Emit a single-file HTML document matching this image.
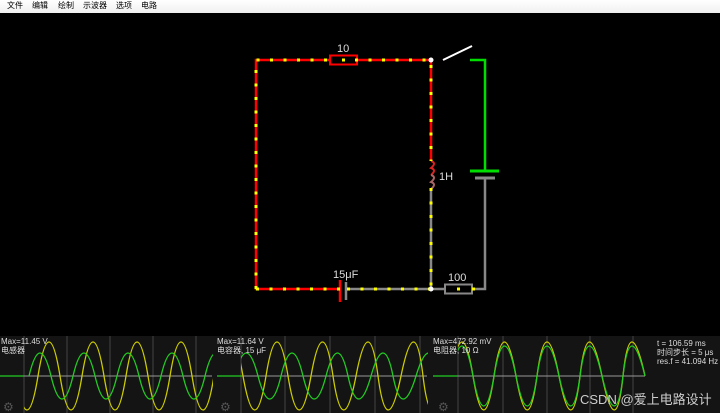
<!DOCTYPE html>
<html><head><meta charset="utf-8"><style>
body{margin:0;width:720px;height:413px;overflow:hidden;background:#000;font-family:"Liberation Sans","Noto Sans CJK SC",sans-serif}
.menu{position:absolute;left:0;top:0;width:720px;height:13px;background:linear-gradient(#fff,#f0f0f0);font-size:8px;line-height:12px;color:#000}
.menu span{position:absolute;top:0}
svg{position:absolute;left:0;top:0}
</style></head><body>
<div class="menu"><span style="left:7px">文件</span><span style="left:32px">编辑</span><span style="left:58px">绘制</span><span style="left:83px">示波器</span><span style="left:116px">选项</span><span style="left:141px">电路</span></div>
<svg width="720" height="413" viewBox="0 0 720 413">
<defs>
<clipPath id="c1"><rect x="24" y="336" width="189" height="77"/></clipPath>
<clipPath id="c2"><rect x="241" y="336" width="187" height="77"/></clipPath>
<clipPath id="c3"><rect x="458" y="336" width="188" height="77"/></clipPath>
</defs>
<!-- circuit wires -->
<g fill="none" stroke-width="2.5">
<path d="M329 60 H256 V289 H340" stroke="#f00"/>
<path d="M357 60 H431 V161" stroke="#f00"/>
<path d="M346 289 H444 M472 289 H485 V178 M431 188 V289" stroke="#888"/>
<path d="M470 60 H485 V171" stroke="#0d0"/>
<path d="M470 171 H499" stroke="#0d0" stroke-width="3"/>
<path d="M475 178 H495" stroke="#888" stroke-width="3"/>
<path d="M443 60 L472 46" stroke="#fff" stroke-width="2"/>
<rect x="330" y="55.5" width="27" height="9" stroke="#f00" stroke-width="2"/>
<rect x="445" y="284.5" width="27" height="9" stroke="#888" stroke-width="2"/>
<path d="M340 280 V302" stroke="#f00" stroke-width="2.5"/>
<path d="M346 282 V300" stroke="#888" stroke-width="2.5"/>
<path d="M431 161 q6 2 0 7 q6 2 0 7" stroke="#d22" stroke-width="2"/>
<path d="M431 175 q6 2 0 7 q6 2 0 7" stroke="#a66" stroke-width="2"/>
<!-- dots -->
<g stroke="#ff0" stroke-width="3" stroke-dasharray="3 10.5">
<path d="M256 289 V60 H329"/><path d="M355 60 H431 V161"/><path d="M256 289 H340"/>
<path d="M431 188 V289"/><path d="M347 289 H431"/><path d="M472 289 H485"/>
<path d="M342 60 H345"/><path d="M457 289 H460"/>
</g>
</g>
<circle cx="431" cy="60" r="2.5" fill="#fff"/><circle cx="431" cy="289" r="2.5" fill="#fff"/>
<g fill="#ddd" font-size="11"><text x="337" y="52">10</text><text x="439" y="180">1H</text><text x="333" y="278">15μF</text><text x="448" y="281">100</text></g>
<!-- scopes -->
<rect x="0" y="336" width="720" height="77" fill="#141414"/>
<g stroke="#444" stroke-width="1">
<path d="M24 336V413M67 336V413M110 336V413M153 336V413M196 336V413"/>
<path d="M241 336V413M285 336V413M330 336V413M375 336V413M420 336V413"/>
<path d="M458 336V413M503 336V413M547 336V413M590 336V413M633 336V413"/>
</g>
<g stroke="#999" stroke-width="1"><path d="M0 376H212M217 376H427M433 376H645"/></g>
<g fill="none" stroke-width="1.3">
<path d="M0 376H24M217 376H241M433 376H458" stroke="#2c2"/>
<g clip-path="url(#c1)">
<path d="M-6 376 Q5 308 16 376 T38 376 T60 376 T82 376 T104 376 T126 376 T148 376 T170 376 T192 376 T214 376" stroke="#cc0"/>
<path d="M29 376 Q40 330 51 376 T73 376 T95 376 T117 376 T139 376 T161 376 T183 376 T205 376 T227 376" stroke="#2c2"/>
</g>
<g clip-path="url(#c2)">
<path d="M220 376 Q231 308 243 376 T266 376 T288 376 T311 376 T333 376 T356 376 T378 376 T401 376 T423 376 T446 376" stroke="#cc0" transform="translate(0,0)"/>
<path d="M235 376 Q246 330 258 376 T281 376 T303 376 T326 376 T348 376 T371 376 T393 376 T416 376 T438 376" stroke="#2c2"/>
</g>
<g clip-path="url(#c3)">
<path d="M451 376 Q462 308 473 376 T494 376 T516 376 T537 376 T559 376 T580 376 T602 376 T623 376 T645 376" stroke="#cc0"/>
<path d="M451 376 Q462 316 473 376 T494 376 T516 376 T537 376 T559 376 T580 376 T602 376 T623 376 T645 376" stroke="#2c2"/>
</g>
</g>
<g fill="#ddd" font-size="8">
<text x="1" y="344">Max=11.45 V</text><text x="1" y="353">电感器</text>
<text x="217" y="344">Max=11.64 V</text><text x="217" y="353">电容器, 15 μF</text>
<text x="433" y="344">Max=472.92 mV</text><text x="433" y="353">电阻器, 10 Ω</text>
<text x="657" y="346">t = 106.59 ms</text><text x="657" y="355">时间步长 = 5 μs</text><text x="657" y="364">res.f = 41.094 Hz</text>
</g>
<g fill="#555" font-size="12"><text x="3" y="411">⚙</text><text x="220" y="411">⚙</text><text x="438" y="411">⚙</text></g>
<text x="580" y="404" fill="#ccc" font-size="13">CSDN @爱上电路设计</text>
</svg>
</body></html>
